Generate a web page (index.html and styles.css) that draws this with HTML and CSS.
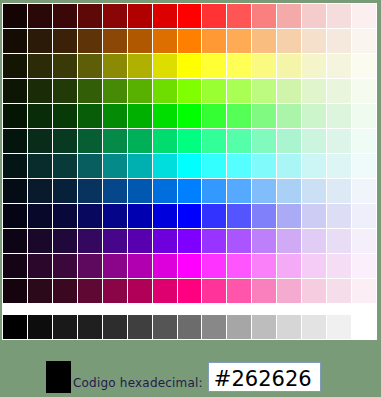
FILE: index.html
```html
<!DOCTYPE html>
<html lang="es">
<head>
<meta charset="utf-8">
<title>Selector de color</title>
<link rel="stylesheet" href="styles.css">
</head>
<body>
<div class="palette">
  <div class="row h0"><span></span><span></span><span></span><span></span><span></span><span></span><span></span><span></span><span></span><span></span><span></span><span></span><span></span><span></span><span></span></div>
  <div class="row h1"><span></span><span></span><span></span><span></span><span></span><span></span><span></span><span></span><span></span><span></span><span></span><span></span><span></span><span></span><span></span></div>
  <div class="row h2"><span></span><span></span><span></span><span></span><span></span><span></span><span></span><span></span><span></span><span></span><span></span><span></span><span></span><span></span><span></span></div>
  <div class="row h3"><span></span><span></span><span></span><span></span><span></span><span></span><span></span><span></span><span></span><span></span><span></span><span></span><span></span><span></span><span></span></div>
  <div class="row h4"><span></span><span></span><span></span><span></span><span></span><span></span><span></span><span></span><span></span><span></span><span></span><span></span><span></span><span></span><span></span></div>
  <div class="row h5"><span></span><span></span><span></span><span></span><span></span><span></span><span></span><span></span><span></span><span></span><span></span><span></span><span></span><span></span><span></span></div>
  <div class="row h6"><span></span><span></span><span></span><span></span><span></span><span></span><span></span><span></span><span></span><span></span><span></span><span></span><span></span><span></span><span></span></div>
  <div class="row h7"><span></span><span></span><span></span><span></span><span></span><span></span><span></span><span></span><span></span><span></span><span></span><span></span><span></span><span></span><span></span></div>
  <div class="row h8"><span></span><span></span><span></span><span></span><span></span><span></span><span></span><span></span><span></span><span></span><span></span><span></span><span></span><span></span><span></span></div>
  <div class="row h9"><span></span><span></span><span></span><span></span><span></span><span></span><span></span><span></span><span></span><span></span><span></span><span></span><span></span><span></span><span></span></div>
  <div class="row h10"><span></span><span></span><span></span><span></span><span></span><span></span><span></span><span></span><span></span><span></span><span></span><span></span><span></span><span></span><span></span></div>
  <div class="row h11"><span></span><span></span><span></span><span></span><span></span><span></span><span></span><span></span><span></span><span></span><span></span><span></span><span></span><span></span><span></span></div>
  <div class="spacer"></div>
  <div class="row grays"><span></span><span></span><span></span><span></span><span></span><span></span><span></span><span></span><span></span><span></span><span></span><span></span><span></span><span></span><span></span></div>
</div>
<div class="info">
  <div class="swatch"></div>
  <label class="label" for="hex">Codigo hexadecimal:</label>
  <input class="hex" id="hex" type="text" value="#262626">
</div>
</body>
</html>
```
FILE: styles.css
```css
html, body {
  margin: 0;
  padding: 0;
  background: #799b77;
}

.palette {
  display: flex;
  flex-direction: column;
  gap: 1px;
  width: max-content;
  margin: 3px 0 0 2px;
  padding: 1px;
  background: #ffffff;
}

.row {
  display: flex;
  gap: 1px;
}

.row > span {
  display: block;
  width: 24px;
  height: 24px;
}

.row > span:nth-child(8) { width: 23px; }

.spacer { height: 10px; }

.h0 { --h: 0; }
.h1 { --h: 30; }
.h2 { --h: 60; }
.h3 { --h: 90; }
.h4 { --h: 120; }
.h5 { --h: 150; }
.h6 { --h: 180; }
.h7 { --h: 210; }
.h8 { --h: 240; }
.h9 { --h: 270; }
.h10 { --h: 300; }
.h11 { --h: 330; }

.row > span:nth-child(1)  { background: hsl(var(--h), 65%, 5%); }
.row > span:nth-child(2)  { background: hsl(var(--h), 68%, 10%); }
.row > span:nth-child(3)  { background: hsl(var(--h), 76%, 13%); }
.row > span:nth-child(4)  { background: hsl(var(--h), 84%, 20%); }
.row > span:nth-child(5)  { background: hsl(var(--h), 93%, 28%); }
.row > span:nth-child(6)  { background: hsl(var(--h), 100%, 34.5%); }
.row > span:nth-child(7)  { background: hsl(var(--h), 100%, 43.3%); }
.row > span:nth-child(8)  { background: hsl(var(--h), 100%, 50%); }
.row > span:nth-child(9)  { background: hsl(var(--h), 100%, 60%); }
.row > span:nth-child(10) { background: hsl(var(--h), 100%, 66.7%); }
.row > span:nth-child(11) { background: hsl(var(--h), 92%, 74%); }
.row > span:nth-child(12) { background: hsl(var(--h), 79%, 81.4%); }
.row > span:nth-child(13) { background: hsl(var(--h), 67%, 88%); }
.row > span:nth-child(14) { background: hsl(var(--h), 55%, 91.4%); }
.row > span:nth-child(15) { background: hsl(var(--h), 60%, 96%); }

.grays > span:nth-child(1)  { background: #000000; }
.grays > span:nth-child(2)  { background: #0d0d0d; }
.grays > span:nth-child(3)  { background: #191919; }
.grays > span:nth-child(4)  { background: #1f1f1f; }
.grays > span:nth-child(5)  { background: #2d2d2d; }
.grays > span:nth-child(6)  { background: #3f3f3f; }
.grays > span:nth-child(7)  { background: #555555; }
.grays > span:nth-child(8)  { background: #6c6c6c; }
.grays > span:nth-child(9)  { background: #888888; }
.grays > span:nth-child(10) { background: #a6a6a6; }
.grays > span:nth-child(11) { background: #bdbdbd; }
.grays > span:nth-child(12) { background: #d6d6d6; }
.grays > span:nth-child(13) { background: #e3e3e3; }
.grays > span:nth-child(14) { background: #f0f0f0; }
.grays > span:nth-child(15) { background: #ffffff; }

.info {
  display: flex;
  align-items: flex-start;
  margin-top: 21px;
  padding-left: 46px;
}

.swatch {
  width: 25px;
  height: 32px;
  background: #000000;
}

.label {
  margin: 15px 0 0 2px;
  font-family: "DejaVu Sans", Verdana, sans-serif;
  font-size: 12px;
  letter-spacing: 0.2px;
  line-height: 14px;
  color: #27194f;
  white-space: nowrap;
}

.hex {
  box-sizing: border-box;
  width: 113px;
  height: 30px;
  margin: 1px 0 0 5px;
  padding: 4px 0 0 5px;
  border: 1px solid #7f9db9;
  background: #ffffff;
  font-family: "DejaVu Sans", Verdana, sans-serif;
  font-size: 21px;
  color: #000000;
  outline: none;
}
```
